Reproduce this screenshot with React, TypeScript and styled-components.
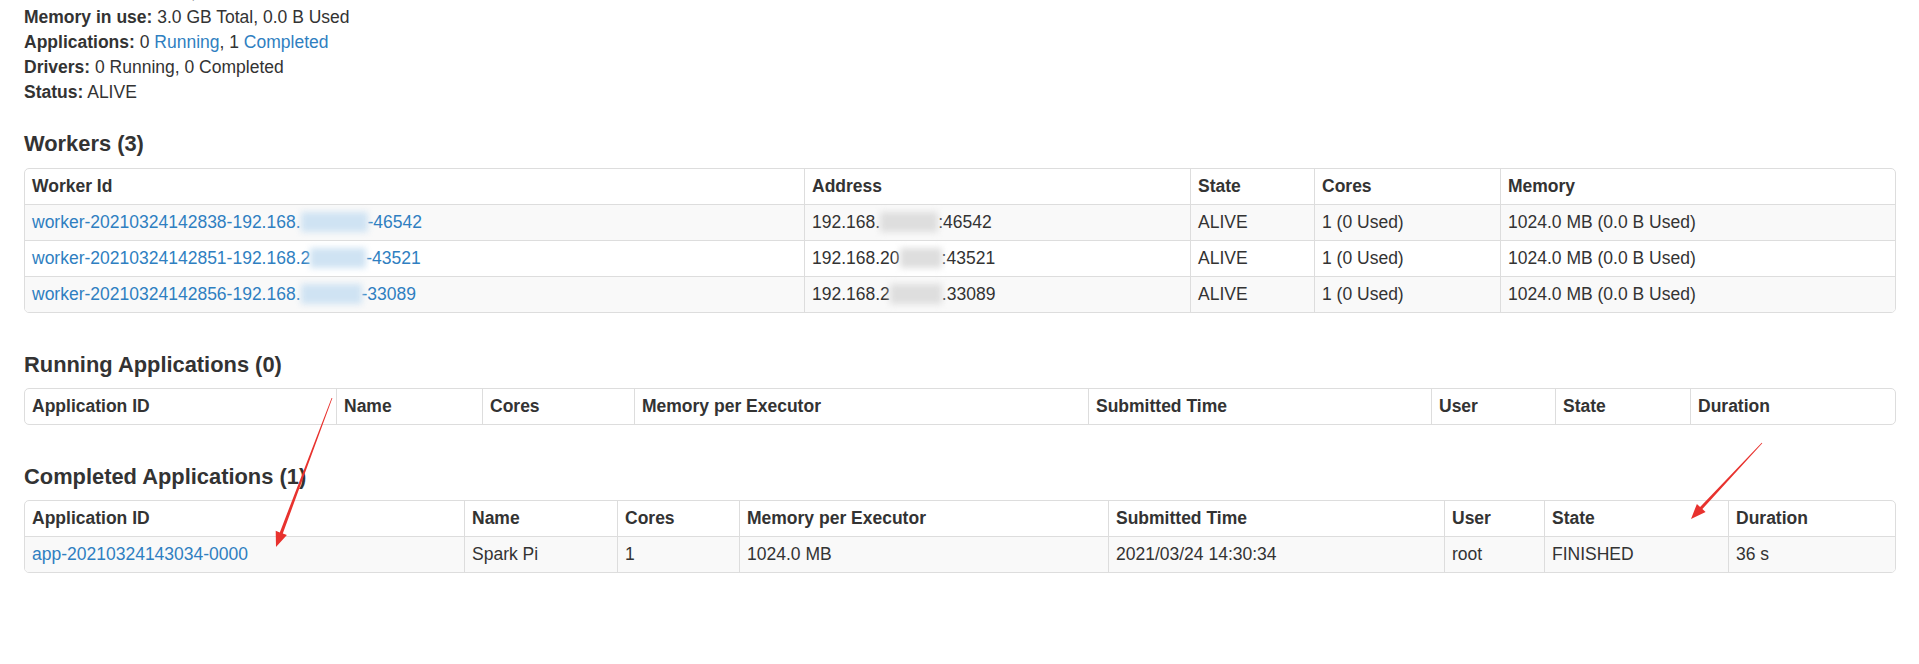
import styled, { createGlobalStyle } from "styled-components";

const GlobalStyle = createGlobalStyle`
  html,
  body {
    margin: 0;
    padding: 0;
    background: #fff;
  }

  body {
    font-family: "Liberation Sans", Arial, sans-serif;
    font-size: 17.5px;
    line-height: 25px;
    color: #333;
    overflow: hidden;
  }

  a {
    color: #2f7fc1;
    text-decoration: none;
  }
`;

const Page = styled.div`
  position: relative;
  height: 664px;
  padding: 0 25px 0 24px;
  overflow: hidden;
`;

const InfoList = styled.ul`
  list-style: none;
  margin: -20px 0 0;
  padding: 0;

  strong {
    font-weight: bold;
  }
`;

const Section = styled.section<{ $gap: number }>`
  margin-top: ${(p) => p.$gap}px;
`;

const Heading = styled.h4<{ $after: number }>`
  margin: 0 0 ${(p) => p.$after}px;
  font-size: 21.875px;
  line-height: 25px;
  font-weight: bold;
  color: #333;
`;

const Table = styled.table`
  width: 100%;
  table-layout: fixed;
  border-collapse: separate;
  border-spacing: 0;
  border: 1px solid #ddd;
  border-radius: 5px;

  tbody tr:nth-child(odd) td {
    background: #f9f9f9;
  }

  tbody tr:last-child td:first-child {
    border-bottom-left-radius: 4px;
  }

  tbody tr:last-child td:last-child {
    border-bottom-right-radius: 4px;
  }
`;

const Col = styled.col<{ $w: number }>`
  width: ${(p) => p.$w}px;
`;

const Th = styled.th`
  text-align: left;
  font-weight: bold;
  padding: 5px 7px;
  line-height: 25px;
  white-space: nowrap;
  overflow: hidden;

  & + & {
    border-left: 1px solid #ddd;
  }
`;

const Td = styled.td`
  padding: 5px 7px;
  line-height: 25px;
  white-space: nowrap;
  overflow: hidden;
  border-top: 1px solid #ddd;

  & + & {
    border-left: 1px solid #ddd;
  }
`;

/* smudge used to hide part of an address in the screenshot */
const Redact = styled.span<{ $w: number; $tone: "blue" | "gray" }>`
  display: inline-block;
  width: ${(p) => p.$w}px;
  height: 20px;
  vertical-align: -4px;
  background: ${(p) => (p.$tone === "blue" ? "#cfe3f3" : "#dedede")};
  filter: blur(3px);
`;

const Overlay = styled.svg`
  position: absolute;
  top: 0;
  left: 0;
  pointer-events: none;
`;

type Hidden = { pre: string; w: number; post: string };

const workers: { id: Hidden; addr: Hidden }[] = [
  {
    id: { pre: "worker-20210324142838-192.168.", w: 67, post: "-46542" },
    addr: { pre: "192.168.", w: 58, post: ":46542" },
  },
  {
    id: { pre: "worker-20210324142851-192.168.2", w: 56, post: "-43521" },
    addr: { pre: "192.168.20", w: 42, post: ":43521" },
  },
  {
    id: { pre: "worker-20210324142856-192.168.", w: 61, post: "-33089" },
    addr: { pre: "192.168.2", w: 52, post: ".33089" },
  },
];

const appHeaders = [
  "Application ID",
  "Name",
  "Cores",
  "Memory per Executor",
  "Submitted Time",
  "User",
  "State",
  "Duration",
];

const arrowPoints = (x1: number, y1: number, x2: number, y2: number) => {
  const dx = x2 - x1;
  const dy = y2 - y1;
  const len = Math.hypot(dx, dy);
  const ux = dx / len;
  const uy = dy / len;
  const nx = -uy;
  const ny = ux;
  const bx = x2 - ux * 15;
  const by = y2 - uy * 15;
  const pts = [
    [x1 + nx * 0.4, y1 + ny * 0.4],
    [bx + nx * 1.6, by + ny * 1.6],
    [bx + nx * 6, by + ny * 6],
    [x2, y2],
    [bx - nx * 6, by - ny * 6],
    [bx - nx * 1.6, by - ny * 1.6],
    [x1 - nx * 0.4, y1 - ny * 0.4],
  ];
  return pts.map((p) => p.map((v) => v.toFixed(1)).join(",")).join(" ");
};

const HiddenText = ({ h, tone }: { h: Hidden; tone: "blue" | "gray" }) => (
  <>
    {h.pre}
    <Redact $w={h.w} $tone={tone} />
    {h.post}
  </>
);

const App = () => {
  return (
    <Page>
      <GlobalStyle />
      <InfoList>
        <li>
          <strong>Cores in use:</strong> 3 Total, 0 Used
        </li>
        <li>
          <strong>Memory in use:</strong> 3.0 GB Total, 0.0 B Used
        </li>
        <li>
          <strong>Applications:</strong> 0 <a href="#running">Running</a>, 1{" "}
          <a href="#completed">Completed</a>
        </li>
        <li>
          <strong>Drivers:</strong> 0 Running, 0 Completed
        </li>
        <li>
          <strong>Status:</strong> ALIVE
        </li>
      </InfoList>

      <Section $gap={26}>
        <Heading $after={12}>Workers (3)</Heading>
        <Table>
          <colgroup>
            <Col $w={779} />
            <Col $w={386} />
            <Col $w={124} />
            <Col $w={186} />
            <Col $w={395} />
          </colgroup>
          <thead>
            <tr>
              <Th>Worker Id</Th>
              <Th>Address</Th>
              <Th>State</Th>
              <Th>Cores</Th>
              <Th>Memory</Th>
            </tr>
          </thead>
          <tbody>
            {workers.map((w) => (
              <tr key={w.id.post}>
                <Td>
                  <a href="#worker">
                    <HiddenText h={w.id} tone="blue" />
                  </a>
                </Td>
                <Td>
                  <HiddenText h={w.addr} tone="gray" />
                </Td>
                <Td>ALIVE</Td>
                <Td>1 (0 Used)</Td>
                <Td>1024.0 MB (0.0 B Used)</Td>
              </tr>
            ))}
          </tbody>
        </Table>
      </Section>

      <Section $gap={39} id="running">
        <Heading $after={11}>Running Applications (0)</Heading>
        <Table>
          <colgroup>
            {[311, 146, 152, 454, 343, 124, 135, 205].map((w, i) => (
              <Col key={i} $w={w} />
            ))}
          </colgroup>
          <thead>
            <tr>
              {appHeaders.map((h) => (
                <Th key={h}>{h}</Th>
              ))}
            </tr>
          </thead>
        </Table>
      </Section>

      <Section $gap={39} id="completed">
        <Heading $after={11}>Completed Applications (1)</Heading>
        <Table>
          <colgroup>
            {[439, 153, 122, 369, 336, 100, 184, 167].map((w, i) => (
              <Col key={i} $w={w} />
            ))}
          </colgroup>
          <thead>
            <tr>
              {appHeaders.map((h) => (
                <Th key={h}>{h}</Th>
              ))}
            </tr>
          </thead>
          <tbody>
            <tr>
              <Td>
                <a href="#app">app-20210324143034-0000</a>
              </Td>
              <Td>Spark Pi</Td>
              <Td>1</Td>
              <Td>1024.0 MB</Td>
              <Td>2021/03/24 14:30:34</Td>
              <Td>root</Td>
              <Td>FINISHED</Td>
              <Td>36 s</Td>
            </tr>
          </tbody>
        </Table>
      </Section>

      <Overlay width="1919" height="664" viewBox="0 0 1919 664">
        <polygon points={arrowPoints(332, 398, 276, 547)} fill="#e8322e" />
        <polygon points={arrowPoints(1762, 443, 1691, 519)} fill="#e8322e" />
      </Overlay>
    </Page>
  );
};

export default App;
